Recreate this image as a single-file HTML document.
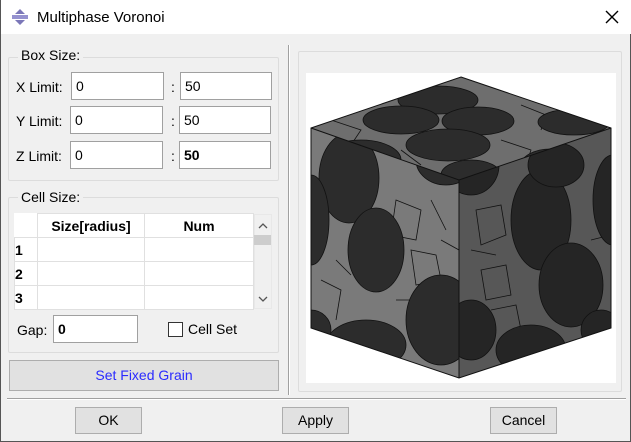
<!DOCTYPE html>
<html><head><style>
*{box-sizing:border-box;margin:0;padding:0}
body{width:631px;height:442px;background:#f0f0f0;font-family:"Liberation Sans","Noto Sans CJK SC",sans-serif;font-size:14px;color:#000;position:relative;overflow:hidden;border:1px solid #555;border-top:none}
.a{position:absolute}
.title{left:0;top:0;width:631px;height:34px;background:#fff}
.grp{border:1px solid #dcdcdc;border-radius:2px}
.lg{background:#f0f0f0;padding:0 3px;font-size:14px}
.in{background:#fff;border:1px solid #a0a0a0;height:28px;padding:5px 4px;font-size:14px}
.btn{background:#e1e1e1;border:1px solid #adadad;text-align:center;font-size:14px;height:27px;line-height:25px}
table{border-collapse:collapse;background:#fff}
td{border:1px solid #e0e0e0;height:24px;font-weight:bold}
</style></head><body>
<div class="a title"></div>
<svg class="a" style="left:10px;top:9px" width="18" height="16" viewBox="0 0 18 16"><path d="M9 0 L14 5 H4 Z M4 11 H14 L9 16 Z" fill="#7b77b8"/><rect x="1" y="6" width="16" height="4" fill="#9591cf"/></svg>
<div class="a" style="left:36px;top:9px;font-size:15px">Multiphase Voronoi</div>
<svg class="a" style="left:604px;top:10px" width="14" height="14" viewBox="0 0 14 14"><path d="M1 1 L13 13 M13 1 L1 13" stroke="#000" stroke-width="1.4"/></svg>

<div class="a grp" style="left:7px;top:57px;width:271px;height:124px"></div>
<div class="a lg" style="left:17px;top:47px">Box Size:</div>
<div class="a" style="left:15px;top:79px">X Limit:</div>
<div class="a in" style="left:70px;top:72px;width:93px">0</div>
<div class="a" style="left:170px;top:79px">:</div>
<div class="a in" style="left:179px;top:72px;width:92px">50</div>
<div class="a" style="left:15px;top:113px">Y Limit:</div>
<div class="a in" style="left:69px;top:106px;width:93px">0</div>
<div class="a" style="left:170px;top:113px">:</div>
<div class="a in" style="left:178px;top:106px;width:92px">50</div>
<div class="a" style="left:15px;top:148px">Z Limit:</div>
<div class="a in" style="left:69px;top:141px;width:93px">0</div>
<div class="a" style="left:170px;top:148px">:</div>
<div class="a in" style="left:178px;top:141px;width:92px;font-weight:bold">50</div>

<div class="a grp" style="left:7px;top:197px;width:271px;height:156px"></div>
<div class="a lg" style="left:17px;top:189px">Cell Size:</div>
<table class="a" style="left:13px;top:213px;width:240px">
<tr><td style="width:23px;border-top:none;border-left:none"></td><td style="width:107px;text-align:center">Size[radius]</td><td style="text-align:center">Num</td></tr>
<tr><td>1</td><td></td><td></td></tr>
<tr><td>2</td><td></td><td></td></tr>
<tr><td>3</td><td></td><td></td></tr>
</table>
<div class="a" style="left:253px;top:214px;width:18px;height:95px;background:#f0f0f0;border:1px solid #e8e8e8"></div>
<div class="a" style="left:253px;top:235px;width:17px;height:10px;background:#cdcdcd"></div>
<svg class="a" style="left:257px;top:222px" width="10" height="8"><path d="M1 6 L5 2 L9 6" stroke="#555" stroke-width="1.3" fill="none"/></svg>
<svg class="a" style="left:257px;top:295px" width="10" height="8"><path d="M1 2 L5 6 L9 2" stroke="#555" stroke-width="1.3" fill="none"/></svg>
<div class="a" style="left:16px;top:322px">Gap:</div>
<div class="a in" style="left:52px;top:315px;width:85px;font-weight:bold">0</div>
<div class="a" style="left:167px;top:322px;width:15px;height:15px;border:1px solid #333;background:#fff"></div>
<div class="a" style="left:187px;top:321px">Cell Set</div>
<div class="a btn" style="left:8px;top:360px;width:270px;height:31px;line-height:29px;color:#2b2bff">Set Fixed Grain</div>

<div class="a" style="left:287px;top:45px;width:2px;height:350px;border-left:1px solid #a0a0a0;border-right:1px solid #fff"></div>
<div class="a grp" style="left:297px;top:51px;width:324px;height:341px"></div>
<div class="a" style="left:305px;top:73px;width:310px;height:310px;background:#fff"></div>
<svg class="a" style="left:305px;top:73px" width="310" height="310" viewBox="305 73 310 310">
<defs>
<clipPath id="t"><polygon points="460,77 610,128 458,180 310,128"/></clipPath>
<clipPath id="l"><polygon points="310,128 458,180 458,378 310,328"/></clipPath>
<clipPath id="r"><polygon points="458,180 610,128 610,328 458,378"/></clipPath>
</defs>
<g stroke="#111" stroke-width="0.8">
<g clip-path="url(#t)"><rect x="300" y="70" width="320" height="120" fill="#6e6e6e"/>
<path d="M330 120 L360 130 L350 145 M520 105 L545 115 L540 130 M500 140 L530 150 L525 165 M400 150 L420 165" fill="none"/>
<ellipse cx="437" cy="100" rx="40" ry="14" fill="#2c2c2c"/><ellipse cx="400" cy="120" rx="38" ry="14" fill="#2c2c2c"/><ellipse cx="477" cy="121" rx="36" ry="14" fill="#2c2c2c"/><ellipse cx="447" cy="145" rx="42" ry="16" fill="#2c2c2c"/><ellipse cx="573" cy="122" rx="36" ry="13" fill="#2c2c2c"/><ellipse cx="550" cy="165" rx="30" ry="16" fill="#2c2c2c"/><ellipse cx="360" cy="160" rx="40" ry="20" fill="#2c2c2c"/><ellipse cx="470" cy="175" rx="30" ry="15" fill="#2c2c2c"/></g>
<g clip-path="url(#l)"><rect x="300" y="120" width="160" height="260" fill="#7a7a7a"/>
<path d="M395 200 L420 210 L415 240 L390 235 Z M410 250 L435 255 L440 280 L415 285 Z M320 280 L340 290 L335 320 M395 300 L420 300 M430 200 L445 230 M335 260 L350 275 M440 240 L458 250" fill="none"/>
<ellipse cx="348" cy="178" rx="30" ry="45" fill="#2c2c2c"/><ellipse cx="375" cy="250" rx="28" ry="42" fill="#2c2c2c"/><ellipse cx="310" cy="220" rx="18" ry="45" fill="#2c2c2c"/><ellipse cx="440" cy="320" rx="35" ry="45" fill="#2c2c2c"/><ellipse cx="365" cy="345" rx="40" ry="25" fill="#2c2c2c"/><ellipse cx="310" cy="330" rx="20" ry="20" fill="#2c2c2c"/><ellipse cx="445" cy="160" rx="30" ry="25" fill="#2c2c2c"/></g>
<g clip-path="url(#r)"><rect x="455" y="120" width="160" height="260" fill="#575757"/>
<path d="M475 210 L500 205 L505 235 L480 245 Z M480 270 L505 265 L510 295 L485 300 Z M490 310 L515 305 L520 330 M470 250 L495 255 M590 240 L610 235" fill="none"/>
<ellipse cx="540" cy="220" rx="30" ry="50" fill="#252525"/><ellipse cx="570" cy="285" rx="32" ry="42" fill="#252525"/><ellipse cx="612" cy="200" rx="20" ry="45" fill="#252525"/><ellipse cx="555" cy="165" rx="28" ry="22" fill="#252525"/><ellipse cx="470" cy="165" rx="28" ry="30" fill="#252525"/><ellipse cx="470" cy="330" rx="25" ry="30" fill="#252525"/><ellipse cx="530" cy="350" rx="35" ry="25" fill="#252525"/><ellipse cx="600" cy="330" rx="20" ry="20" fill="#252525"/></g>
</g>
<polygon points="460,77 610,128 610,328 458,378 310,328 310,128" fill="none" stroke="#111"/>
<path d="M310 128 L458 180 L610 128 M458 180 V378" stroke="#111" fill="none"/>
</svg>

<div class="a" style="left:6px;top:398px;width:619px;height:2px;border-top:1px solid #a0a0a0;border-bottom:1px solid #fff"></div>
<div class="a btn" style="left:74px;top:407px;width:67px">OK</div>
<div class="a btn" style="left:281px;top:407px;width:67px">Apply</div>
<div class="a btn" style="left:489px;top:407px;width:67px">Cancel</div>
</body></html>
